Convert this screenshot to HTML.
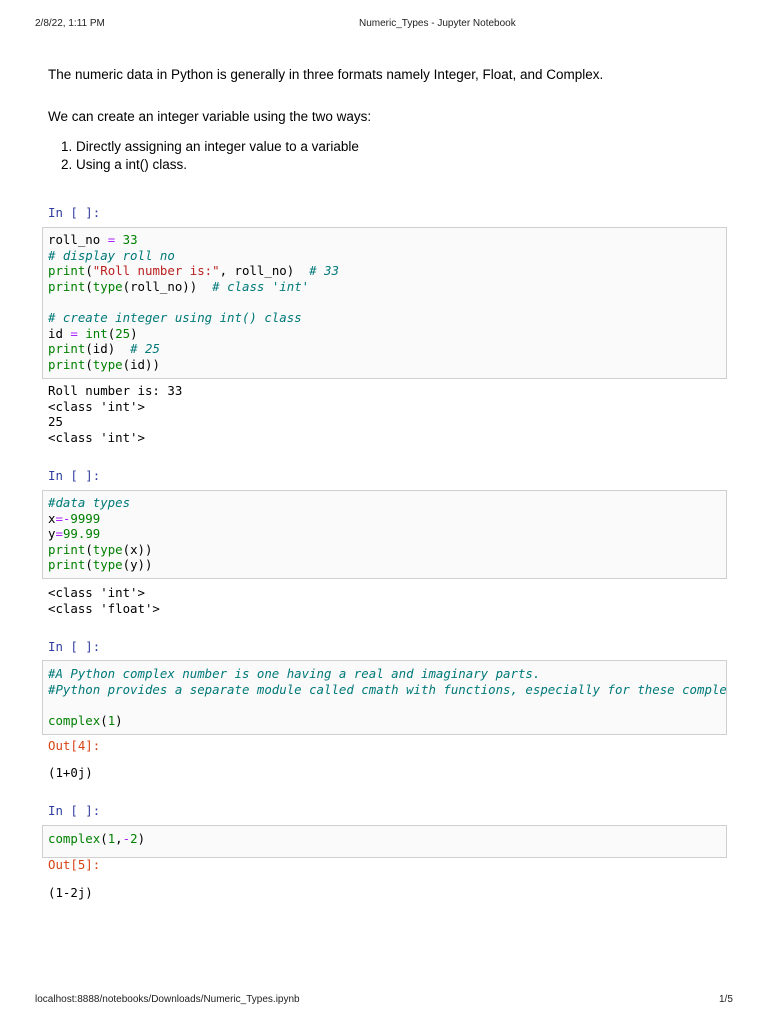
<!DOCTYPE html>
<html><head><meta charset="utf-8"><style>
*{margin:0;padding:0}
body{width:768px;height:1024px;background:#fff;position:relative;overflow:hidden;font-family:"Liberation Sans",sans-serif;color:#000}
.a{position:absolute;white-space:pre;line-height:15.6px}
.s{font-size:10px;color:#222}
.t{font-size:13.5px;line-height:16px}
.m{font-family:"DejaVu Sans Mono","Liberation Mono",monospace;font-size:12.4px}
.box{position:absolute;left:42px;width:683px;border:1px solid #cfcfcf;background:#fafafa}
.in{color:#303f9f}.out{color:#d84315}
.g{color:#008000}.n{color:#008000}.c{color:#007979;font-style:italic}.r{color:#ba2121}.o{color:#aa22ff}
</style></head><body>
<div class="a s" style="left:35px;top:16px">2/8/22, 1:11 PM</div>
<div class="a s" style="left:359px;top:16px">Numeric_Types - Jupyter Notebook</div>
<div class="a t" style="left:48px;top:67px">The numeric data in Python is generally in three formats namely Integer, Float, and Complex.</div>
<div class="a t" style="left:48px;top:109px">We can create an integer variable using the two ways:</div>
<div class="a t" style="left:61px;top:139px">1. Directly assigning an integer value to a variable</div>
<div class="a t" style="left:61px;top:157px">2. Using a int() class.</div>

<div class="a m in" style="left:48px;top:205px">In [ ]:</div>
<div class="box" style="top:227px;height:150px"></div>
<div class="a m" style="left:48px;top:232px">roll_no <span class="o">=</span> <span class="n">33</span>
<span class="c"># display roll no</span>
<span class="g">print</span>(<span class="r">"Roll number is:"</span>, roll_no)  <span class="c"># 33</span>
<span class="g">print</span>(<span class="g">type</span>(roll_no))  <span class="c"># class 'int'</span>

<span class="c"># create integer using int() class</span>
id <span class="o">=</span> <span class="g">int</span>(<span class="n">25</span>)
<span class="g">print</span>(id)  <span class="c"># 25</span>
<span class="g">print</span>(<span class="g">type</span>(id))</div>
<div class="a m" style="left:48px;top:383px">Roll number is: 33
&lt;class 'int'&gt;
25
&lt;class 'int'&gt;</div>

<div class="a m in" style="left:48px;top:468px">In [ ]:</div>
<div class="box" style="top:490px;height:87px"></div>
<div class="a m" style="left:48px;top:495px"><span class="c">#data types</span>
x<span class="o">=-</span><span class="n">9999</span>
y<span class="o">=</span><span class="n">99.99</span>
<span class="g">print</span>(<span class="g">type</span>(x))
<span class="g">print</span>(<span class="g">type</span>(y))</div>
<div class="a m" style="left:48px;top:585px">&lt;class 'int'&gt;
&lt;class 'float'&gt;</div>

<div class="a m in" style="left:48px;top:639px">In [ ]:</div>
<div class="box" style="top:660px;height:73px;overflow:hidden"><div class="a m" style="left:5px;top:5px"><span class="c">#A Python complex number is one having a real and imaginary parts.</span>
<span class="c">#Python provides a separate module called cmath with functions, especially for these complex numbers.</span>

<span class="g">complex</span>(<span class="n">1</span>)</div></div>
<div class="a m out" style="left:48px;top:738px">Out[4]:</div>
<div class="a m" style="left:48px;top:765px">(1+0j)</div>

<div class="a m in" style="left:48px;top:803px">In [ ]:</div>
<div class="box" style="top:825px;height:31px"></div>
<div class="a m" style="left:48px;top:831px"><span class="g">complex</span>(<span class="n">1</span>,<span class="o">-</span><span class="n">2</span>)</div>
<div class="a m out" style="left:48px;top:857px">Out[5]:</div>
<div class="a m" style="left:48px;top:885px">(1-2j)</div>

<div class="a s" style="left:35px;top:992px">localhost:8888/notebooks/Downloads/Numeric_Types.ipynb</div>
<div class="a s" style="left:719px;top:992px">1/5</div>
</body></html>
